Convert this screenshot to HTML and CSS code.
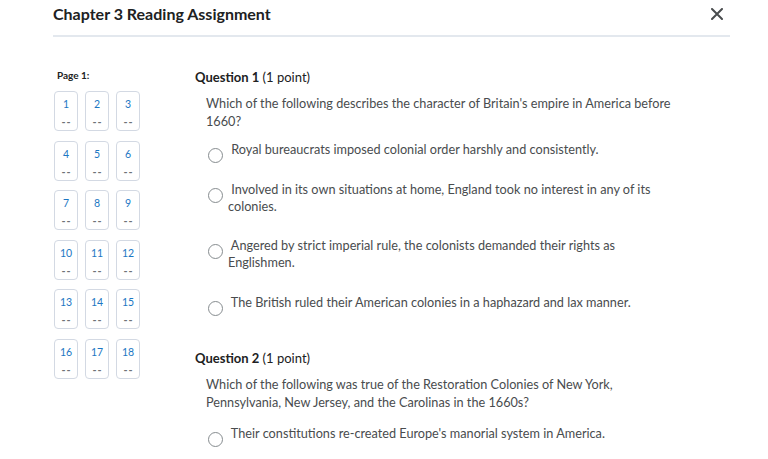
FILE: index.html
```html
<!DOCTYPE html>
<html lang="en">
<head>
<meta charset="utf-8">
<title>Chapter 3 Reading Assignment</title>
<link rel="stylesheet" href="styles.css">
</head>
<body>
<header class="header">
  <h1 class="title">Chapter 3 Reading Assignment</h1>
  <button class="close" aria-label="Close">
    <svg width="12" height="12" viewBox="0 0 12 12"><path d="M1 1L11 11M11 1L1 11" stroke="#494c4e" stroke-width="2" stroke-linecap="round"/></svg>
  </button>
</header>
<main class="main">
  <aside class="sidebar">
    <div class="page-label">Page 1:</div>
    <div class="tiles">
      <a class="tile"><span class="num">1</span><span class="dash">--</span></a>
      <a class="tile"><span class="num">2</span><span class="dash">--</span></a>
      <a class="tile"><span class="num">3</span><span class="dash">--</span></a>
      <a class="tile"><span class="num">4</span><span class="dash">--</span></a>
      <a class="tile"><span class="num">5</span><span class="dash">--</span></a>
      <a class="tile"><span class="num">6</span><span class="dash">--</span></a>
      <a class="tile"><span class="num">7</span><span class="dash">--</span></a>
      <a class="tile"><span class="num">8</span><span class="dash">--</span></a>
      <a class="tile"><span class="num">9</span><span class="dash">--</span></a>
      <a class="tile"><span class="num">10</span><span class="dash">--</span></a>
      <a class="tile"><span class="num">11</span><span class="dash">--</span></a>
      <a class="tile"><span class="num">12</span><span class="dash">--</span></a>
      <a class="tile"><span class="num">13</span><span class="dash">--</span></a>
      <a class="tile"><span class="num">14</span><span class="dash">--</span></a>
      <a class="tile"><span class="num">15</span><span class="dash">--</span></a>
      <a class="tile"><span class="num">16</span><span class="dash">--</span></a>
      <a class="tile"><span class="num">17</span><span class="dash">--</span></a>
      <a class="tile"><span class="num">18</span><span class="dash">--</span></a>
    </div>
  </aside>
  <section class="content">
    <div class="question q1">
      <h2 class="q-title"><b>Question 1</b> (1 point)</h2>
      <p class="q-text">Which of the following describes the character of Britain's empire in America before 1660?</p>
      <ul class="options">
        <li class="option"><span class="radio"></span><span class="opt-text">&nbsp;Royal bureaucrats imposed colonial order harshly and consistently.</span></li>
        <li class="option"><span class="radio"></span><span class="opt-text">&nbsp;Involved in its own situations at home, England took no interest in any of its colonies.</span></li>
        <li class="option"><span class="radio"></span><span class="opt-text">&nbsp;Angered by strict imperial rule, the colonists demanded their rights as Englishmen.</span></li>
        <li class="option"><span class="radio"></span><span class="opt-text">&nbsp;The British ruled their American colonies in a haphazard and lax manner.</span></li>
      </ul>
    </div>
    <div class="question q2">
      <h2 class="q-title"><b>Question 2</b> (1 point)</h2>
      <p class="q-text">Which of the following was true of the Restoration Colonies of New York, Pennsylvania, New Jersey, and the Carolinas in the 1660s?</p>
      <ul class="options">
        <li class="option"><span class="radio"></span><span class="opt-text">&nbsp;Their constitutions re-created Europe's manorial system in America.</span></li>
      </ul>
    </div>
  </section>
</main>
</body>
</html>
```
FILE: styles.css
```css
* { box-sizing: border-box; }
html, body { margin: 0; padding: 0; }
body {
  font-family: Lato, "Noto Sans", sans-serif;
  color: #494c4e;
  background: #fff;
  width: 768px;
  height: 459px;
  overflow: hidden;
}
.header {
  margin: 0 38px 0 53px;
  height: 37px;
  padding-top: 4px;
  display: flex;
  justify-content: space-between;
  align-items: flex-start;
  border-bottom: 2px solid #e3e8ee;
}
.title {
  margin: 0;
  font-size: 16px;
  line-height: 20px;
  font-weight: 700;
  color: #202122;
}
.close {
  border: 0;
  background: none;
  padding: 0;
  margin: 4px 7px 0 0;
  width: 12px;
  height: 12px;
  display: block;
}
.close svg { display: block; }
.main {
  display: flex;
  padding-left: 54px;
}
.sidebar {
  width: 141px;
  flex: none;
  padding-top: 32px;
}
.page-label {
  font-size: 10px;
  font-weight: 700;
  line-height: 12px;
  margin-left: 3px;
  color: #202122;
}
.tiles {
  margin-top: 10px;
  display: grid;
  grid-template-columns: repeat(3, 24px);
  grid-auto-rows: 40px;
  column-gap: 7px;
  row-gap: 9.5px;
}
.tile {
  border: 1px solid #d3d9e3;
  border-radius: 4px;
  display: flex;
  flex-direction: column;
  align-items: center;
  padding-top: 5px;
}
.num {
  font-size: 10.5px;
  line-height: 14px;
  color: #1c77c3;
}
.dash {
  font-size: 11px;
  line-height: 14px;
  margin-top: 4px;
  color: #6e7376;
  font-weight: 700;
  letter-spacing: 1px;
  padding-left: 1px;
}
.content {
  flex: 1;
  padding-top: 32px;
  padding-right: 20px;
}
.q-title {
  margin: 0;
  font-size: 13px;
  line-height: 16px;
  font-weight: 400;
  color: #202122;
}
.q-title b { font-weight: 700; }
.q-text {
  margin: 9px 0 0 11px;
  font-size: 12.7px;
  line-height: 18px;
  max-width: 472px;
}
.options {
  list-style: none;
  margin: 11px 0 0 13px;
  padding: 0;
}
.option {
  display: flex;
  align-items: flex-start;
  font-size: 12.7px;
  line-height: 17px;
  margin-bottom: 22.5px;
}
.radio {
  flex: none;
  width: 15px;
  height: 15px;
  border: 1px solid #868c8f;
  border-radius: 50%;
  margin-top: 7px;
  margin-bottom: -5px;
  margin-right: 5px;
}
.opt-text {
  max-width: 450px;
}
.q2 { margin-top: 39.5px; }
.q2 .options { margin-top: 14px; }
```
